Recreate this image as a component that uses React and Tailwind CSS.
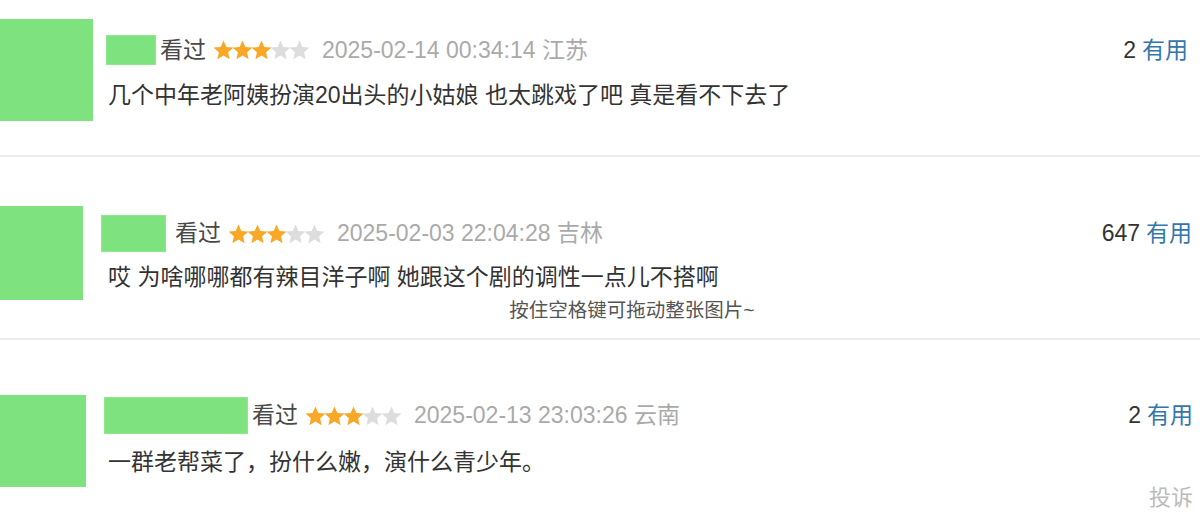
import React from 'react';

const Star = ({ on }) => (
    <svg width="19" height="20" viewBox="1.6 1.4 20.8 21">
        <path
            d="M12 1.5l3.1 7.1 7.7.7-5.8 5.1 1.7 7.6L12 18l-6.7 4 1.7-7.6-5.8-5.1 7.7-.7z"
            fill={on ? '#f9a726' : '#dddddd'}
        />
    </svg>
);

const Stars = ({ n }) => (
    <span className="flex items-center ml-[8px]">
        {[0, 1, 2, 3, 4].map((i) => <Star key={i} on={i < n} />)}
    </span>
);

const Header = ({ nameCls, gap, date, loc, count, pr }) => (
    <div className={`flex items-center justify-between ${pr}`}>
        <div className="flex items-center">
            <span className={`bg-[#7ee37e] border border-[#8ee88e] ${nameCls}`}></span>
            <span className={`${gap} text-[#494949]`}>看过</span>
            <Stars n={3} />
            <span className="ml-[13px] text-[#aaaaaa]">{date} {loc}</span>
        </div>
        <div>
            <span className="text-[#333]">{count}</span>
            <span className="ml-[6px] text-[#3377aa]">有用</span>
        </div>
    </div>
);

const App = () => {
    return (
        <div
            className="w-[1200px] h-[521px] bg-white overflow-hidden text-[23px] leading-none"
            style={{ fontFamily: '"Liberation Sans", Arial, "Noto Sans CJK SC", sans-serif' }}
        >
            {/* comment 1 */}
            <div className="h-[155px] flex items-start">
                <div className="mt-[19px] w-[93px] h-[102px] bg-[#7ee37e] shrink-0"></div>
                <div className="flex-1 ml-[13px] pt-[35px]">
                    <Header nameCls="w-[50px] h-[30px]" gap="ml-[4px]" date="2025-02-14 00:34:14" loc="江苏" count="2" pr="pr-[12px]" />
                    <p className="mt-[15px] h-[30px] flex items-center ml-[2px] text-[23px] text-[#333]">
                        几个中年老阿姨扮演20出头的小姑娘 也太跳戏了吧 真是看不下去了
                    </p>
                </div>
            </div>
            <div className="h-[2px] bg-[#ececec]"></div>

            {/* comment 2 */}
            <div className="h-[181px] flex items-start">
                <div className="mt-[49px] w-[83px] h-[94px] bg-[#7ee37e] shrink-0"></div>
                <div className="flex-1 ml-[18px] pt-[58px]">
                    <Header nameCls="w-[65px] h-[37px]" gap="ml-[9px]" date="2025-02-03 22:04:28" loc="吉林" count="647" pr="pr-[8px]" />
                    <p className="mt-[10px] h-[30px] flex items-center ml-[7px] text-[23px] text-[#333]">
                        哎 为啥哪哪都有辣目洋子啊 她跟这个剧的调性一点儿不搭啊
                    </p>
                    <p className="mt-[7px] h-[24px] flex items-center justify-center -ml-[101px] pl-[64px] text-[19.5px] text-[#555]">
                        按住空格键可拖动整张图片~
                    </p>
                </div>
            </div>
            <div className="h-[2px] bg-[#ececec]"></div>

            {/* comment 3 */}
            <div className="h-[181px] flex items-start">
                <div className="mt-[55px] w-[86px] h-[92px] bg-[#7ee37e] shrink-0"></div>
                <div className="flex-1 ml-[18px] pt-[57px]">
                    <Header nameCls="w-[144px] h-[37px]" gap="ml-[4px]" date="2025-02-13 23:03:26" loc="云南" count="2" pr="pr-[7px]" />
                    <p className="mt-[13px] h-[30px] flex items-center ml-[4px] text-[23px] text-[#333]">
                        一群老帮菜了，扮什么嫩，演什么青少年。
                    </p>
                    <div className="mt-[10px] flex justify-end pr-[7px] text-[22px] text-[#bbbbbb]">投诉</div>
                </div>
            </div>
        </div>
    );
};

export default App;
